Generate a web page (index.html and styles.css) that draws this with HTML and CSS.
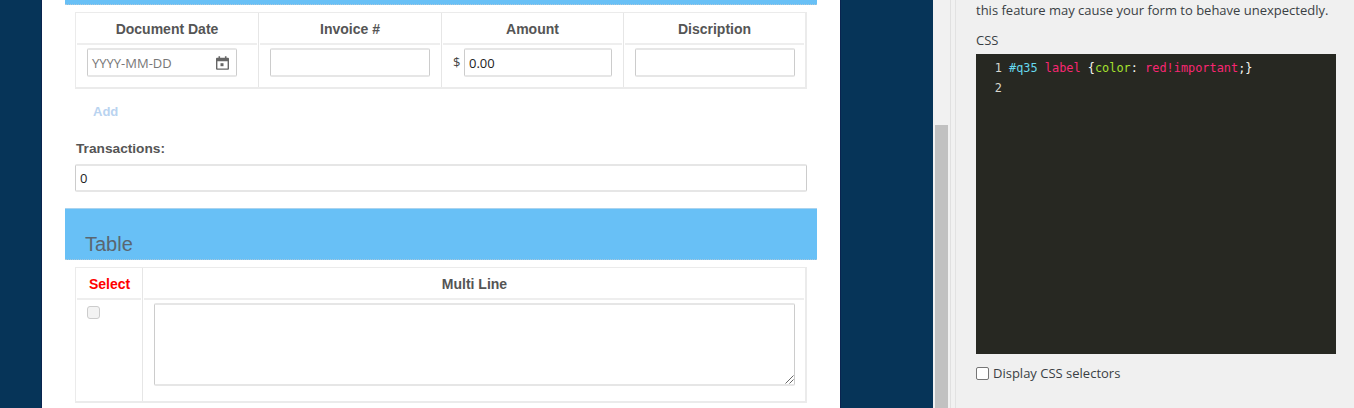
FILE: index.html
```html
<!DOCTYPE html>
<html lang="en">
<head>
<meta charset="utf-8">
<title>Form editor</title>
<link rel="stylesheet" href="styles.css">
</head>
<body>
<div class="app">
  <main class="canvas">
    <div class="sheet">
      <div class="band band-top"></div>
      <div class="indent">
        <div class="grid grid-docs">
          <div class="th">Document Date</div>
          <div class="th">Invoice #</div>
          <div class="th">Amount</div>
          <div class="th">Discription</div>
          <div class="td">
            <div class="field date">
              <span>YYYY-MM-DD</span>
              <svg class="cal" viewBox="0 0 13 14" width="13" height="14"><path fill="#666" d="M2.5 0.3h1.6V1.8h4.8V0.3h1.6V1.8H12a1 1 0 0 1 1 1v10a1 1 0 0 1-1 1H1a1 1 0 0 1-1-1v-10a1 1 0 0 1 1-1h1.500zM1.400 5.200v7.200h10.200V5.200z"/><rect fill="#666" x="4.500" y="7.200" width="3" height="3"/></svg>
            </div>
          </div>
          <div class="td"><div class="field"></div></div>
          <div class="td"><span class="dollar">$</span><div class="field value">0.00</div></div>
          <div class="td"><div class="field"></div></div>
        </div>
        <div class="add">Add</div>
        <div class="label">Transactions:</div>
        <div class="field wide value">0</div>
      </div>
      <div class="band band-table"><h2>Table</h2></div>
      <div class="indent">
        <div class="grid grid-lines">
          <div class="th red">Select</div>
          <div class="th">Multi Line</div>
          <div class="td check"><span class="box"></span></div>
          <div class="td">
            <div class="area">
              <svg class="grip" viewBox="0 0 9 9" width="9" height="9"><path stroke="#666" fill="none" d="M0.500 8.500L8.500 0.500M4.500 8.500L8.500 4.500"/></svg>
            </div>
          </div>
        </div>
      </div>
    </div>
  </main>
  <div class="scroll"><div class="gutter"><div class="thumb"></div></div></div>
  <aside class="panel">
    <p class="warn">this feature may cause your form to behave unexpectedly.</p>
    <div class="css-title">CSS</div>
    <div class="code">
      <div class="line"><span class="num">1</span><span><span class="blue">#q35</span> <span class="pink">label</span> <span class="white">{</span><span class="green">color</span><span class="white">:</span> <span class="pink">red!important</span><span class="white">;}</span></span></div>
      <div class="line"><span class="num">2</span></div>
    </div>
    <label class="opt"><span class="optbox"></span>Display CSS selectors</label>
  </aside>
</div>
</body>
</html>
```
FILE: styles.css
```css
* { box-sizing: border-box; }
html, body { margin: 0; height: 408px; overflow: hidden; }
body { font-family: "Liberation Sans", Arial, sans-serif; color: #555; }
.app { display: flex; width: 1354px; height: 408px; }
.canvas { width: 933px; background: #063458; padding-left: 42px; }
.sheet { width: 799px; height: 408px; background: #fff; border-right: 1px solid #0a2450; box-shadow: -1px 0 0 #0a2450; padding-left: 23px; }
.band { width: 752px; background: #68c0f6; border-bottom: 1px dotted #a9c8dc; }
.band-top { height: 5px; }
.indent { padding-left: 10px; width: 742px; }
.grid { display: grid; width: 732px; border: 2px solid #ebebeb; border-width: 1px 2px 2px 1px; }
.grid-docs { margin-top: 7px; grid-template-columns: 183px 183px 182px 1fr; grid-template-rows: 32px 42px; }
.grid-lines { margin-top: 7px; grid-template-columns: 67px 1fr; grid-template-rows: 32px 101px; }
.th { display: flex; align-items: center; justify-content: center; font-size: 14px; font-weight: 700; color: #555; border-right: 1px solid #e6e6e6; position: relative; }
.grid-lines .th { padding-left: 1px; }
.th::after { content: ""; position: absolute; left: 1px; right: 1px; bottom: 0; height: 2px; background: #eee; }
.th:nth-child(4), .grid-lines .th:nth-child(2), .td:last-child { border-right: 0; }
.red { color: #f00; }
.td { display: flex; align-items: flex-start; padding: 3px 11px 0; border-right: 1px solid #e6e6e6; font-size: 13px; }
.td:last-child { padding-right: 10px; }
.field { height: 29px; flex: 1; border: 1px solid #ccc; border-top: 2px solid #e6e6e6; border-bottom: 2px solid #e6e6e6; border-radius: 2px; background: #fff; font-family: "Open Sans", sans-serif; font-size: 13px; padding: 0 4px; display: flex; align-items: center; color: #222; }
.date { flex: none; width: 150px; justify-content: space-between; color: #777; padding-right: 7px; }
.cal { flex: none; }
.dollar { flex: none; width: 11px; font-family: "Open Sans", sans-serif; font-size: 13px; color: #444; line-height: 29px; }
.add { margin: 15px 0 0 18px; height: 15px; line-height: 15px; font-size: 13px; font-weight: 700; color: #b9d3f0; }
.label { margin: 22px 0 0 1px; height: 15px; line-height: 15px; font-size: 13.7px; font-weight: 700; color: #555; }
.wide { width: 732px; flex: none; margin-top: 8px; height: 28px; }
.band-table { height: 52px; margin-top: 16px; border-top: 1px solid #a9d3ef; }
.band-table h2 { margin: 0; padding: 23px 0 0 20px; font-size: 20px; line-height: 24px; font-weight: 400; color: #5a6670; }
.td.check { padding: 6px 0 0 11px; }
.box { width: 13px; height: 13px; border: 1px solid #ccc; border-radius: 3px; background: #f3f3f3; }
.area { flex: 1; height: 83px; border: 1px solid #ccc; border-top: 2px solid #e6e6e6; border-bottom: 2px solid #e6e6e6; border-radius: 2px; position: relative; }
.grip { position: absolute; right: 0; bottom: 0; }
.scroll { width: 23px; background: #f1f1f1; border-right: 1px solid #e2e2e2; }
.gutter { width: 18px; height: 408px; padding: 125px 0 0 2px; border-right: 1px solid #e0e0e0; }
.thumb { width: 13px; height: 283px; background: #c1c1c1; }
.panel { flex: 1; background: #f0f0f0; padding: 0 18px 0 20px; font-family: "Open Sans", sans-serif; font-size: 13px; color: #3a3f44; }
.warn { margin: 1px 0 0; line-height: 18px; white-space: nowrap; }
.css-title { margin-top: 12px; line-height: 18px; }
.code { margin-top: 5px; height: 300px; background: #272822; padding-top: 6px; font-family: "DejaVu Sans Mono", monospace; font-size: 11.9px; }
.line { height: 20px; line-height: 17px; display: flex; white-space: pre; color: #f8f8f2; }
.num { width: 26px; text-align: right; margin-right: 7px; color: #d8d8d0; }
.blue { color: #66d9ef; }
.pink { color: #f92672; }
.green { color: #a6e22e; }
.white { color: #f8f8f2; }
.opt { display: flex; align-items: center; margin-top: 10px; line-height: 18px; }
.optbox { width: 13px; height: 13px; border: 1px solid #767676; border-radius: 2px; background: #fff; margin-right: 4px; }
```
